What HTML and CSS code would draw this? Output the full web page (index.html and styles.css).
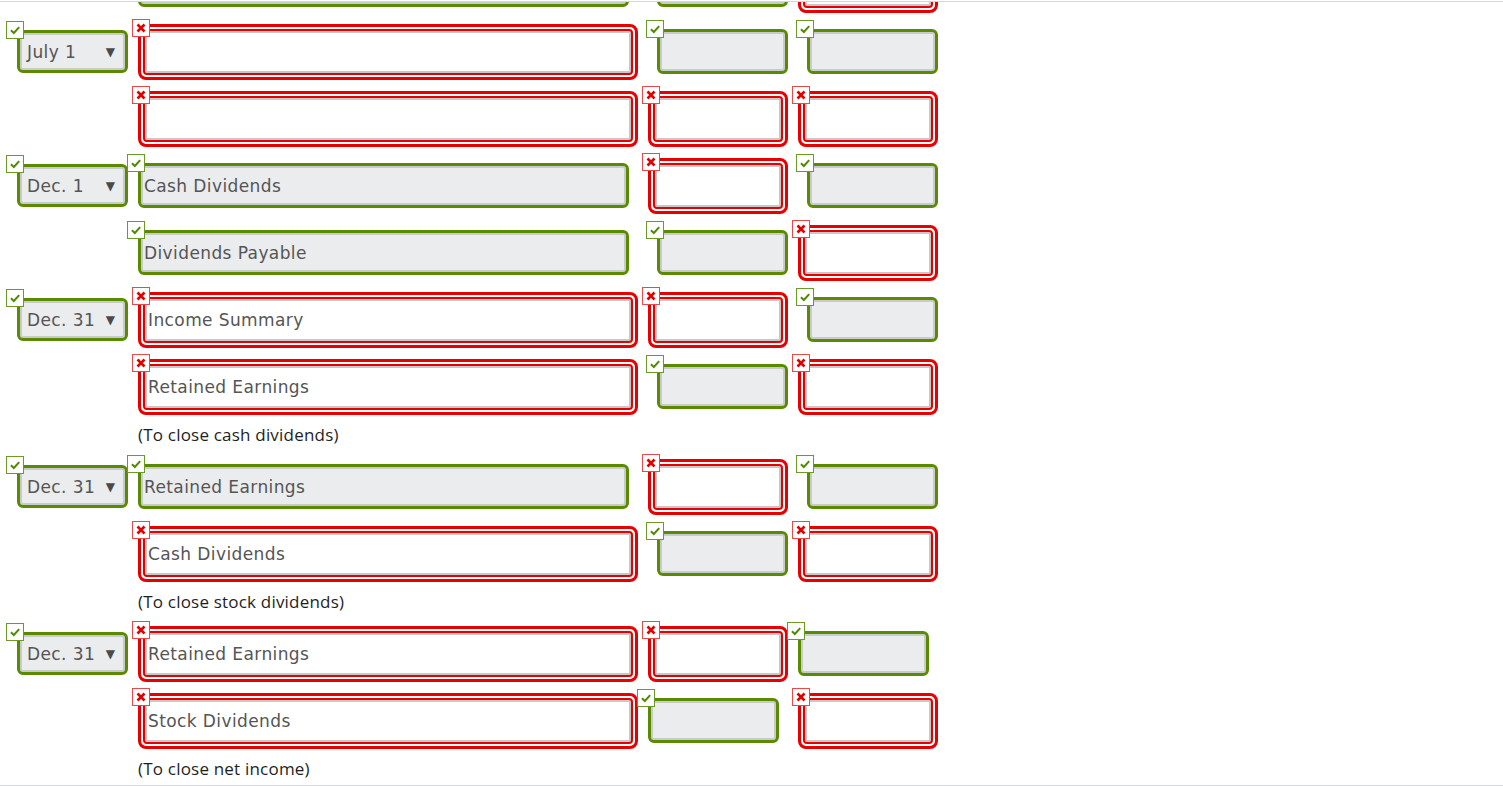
FILE: index.html
```html
<!DOCTYPE html>
<html>
<head>
<meta charset="utf-8">
<title>Journal entries</title>
<link rel="stylesheet" href="styles.css">
</head>
<body>
<div class="frame">
<div class="sheet">

  <div class="row">
    <div class="c-date"></div>
    <div class="c-acct"><div class="ok acct"><span class="badge b-ok"><svg viewBox="0 0 12 12"><polyline points="2.5,6.3 5,8.6 9.6,3.6"/></svg></span></div></div>
    <div class="c-amt"><div class="ok amt shift"><span class="badge b-ok"><svg viewBox="0 0 12 12"><polyline points="2.5,6.3 5,8.6 9.6,3.6"/></svg></span></div></div>
    <div class="c-amt"><div class="bad amt"><span class="badge b-bad"><svg viewBox="0 0 12 12"><path d="M3 3L9 9M9 3L3 9"/></svg></span><div class="inp"></div></div></div>
  </div>

  <div class="row">
    <div class="c-date"><div class="ok date"><span class="badge b-ok"><svg viewBox="0 0 12 12"><polyline points="2.5,6.3 5,8.6 9.6,3.6"/></svg></span><span>July 1</span><span class="arrow">▼</span></div></div>
    <div class="c-acct"><div class="bad acct"><span class="badge b-bad"><svg viewBox="0 0 12 12"><path d="M3 3L9 9M9 3L3 9"/></svg></span><div class="inp"></div></div></div>
    <div class="c-amt"><div class="ok amt shift"><span class="badge b-ok"><svg viewBox="0 0 12 12"><polyline points="2.5,6.3 5,8.6 9.6,3.6"/></svg></span></div></div>
    <div class="c-amt"><div class="ok amt shift"><span class="badge b-ok"><svg viewBox="0 0 12 12"><polyline points="2.5,6.3 5,8.6 9.6,3.6"/></svg></span></div></div>
  </div>

  <div class="row">
    <div class="c-date"></div>
    <div class="c-acct"><div class="bad acct"><span class="badge b-bad"><svg viewBox="0 0 12 12"><path d="M3 3L9 9M9 3L3 9"/></svg></span><div class="inp"></div></div></div>
    <div class="c-amt"><div class="bad amt"><span class="badge b-bad"><svg viewBox="0 0 12 12"><path d="M3 3L9 9M9 3L3 9"/></svg></span><div class="inp"></div></div></div>
    <div class="c-amt"><div class="bad amt"><span class="badge b-bad"><svg viewBox="0 0 12 12"><path d="M3 3L9 9M9 3L3 9"/></svg></span><div class="inp"></div></div></div>
  </div>

  <div class="row">
    <div class="c-date"><div class="ok date"><span class="badge b-ok"><svg viewBox="0 0 12 12"><polyline points="2.5,6.3 5,8.6 9.6,3.6"/></svg></span><span>Dec. 1</span><span class="arrow">▼</span></div></div>
    <div class="c-acct"><div class="ok acct"><span class="badge b-ok"><svg viewBox="0 0 12 12"><polyline points="2.5,6.3 5,8.6 9.6,3.6"/></svg></span>Cash Dividends</div></div>
    <div class="c-amt"><div class="bad amt"><span class="badge b-bad"><svg viewBox="0 0 12 12"><path d="M3 3L9 9M9 3L3 9"/></svg></span><div class="inp"></div></div></div>
    <div class="c-amt"><div class="ok amt shift"><span class="badge b-ok"><svg viewBox="0 0 12 12"><polyline points="2.5,6.3 5,8.6 9.6,3.6"/></svg></span></div></div>
  </div>

  <div class="row">
    <div class="c-date"></div>
    <div class="c-acct"><div class="ok acct"><span class="badge b-ok"><svg viewBox="0 0 12 12"><polyline points="2.5,6.3 5,8.6 9.6,3.6"/></svg></span>Dividends Payable</div></div>
    <div class="c-amt"><div class="ok amt shift"><span class="badge b-ok"><svg viewBox="0 0 12 12"><polyline points="2.5,6.3 5,8.6 9.6,3.6"/></svg></span></div></div>
    <div class="c-amt"><div class="bad amt"><span class="badge b-bad"><svg viewBox="0 0 12 12"><path d="M3 3L9 9M9 3L3 9"/></svg></span><div class="inp"></div></div></div>
  </div>

  <div class="row">
    <div class="c-date"><div class="ok date"><span class="badge b-ok"><svg viewBox="0 0 12 12"><polyline points="2.5,6.3 5,8.6 9.6,3.6"/></svg></span><span>Dec. 31</span><span class="arrow">▼</span></div></div>
    <div class="c-acct"><div class="bad acct"><span class="badge b-bad"><svg viewBox="0 0 12 12"><path d="M3 3L9 9M9 3L3 9"/></svg></span><div class="inp">Income Summary</div></div></div>
    <div class="c-amt"><div class="bad amt"><span class="badge b-bad"><svg viewBox="0 0 12 12"><path d="M3 3L9 9M9 3L3 9"/></svg></span><div class="inp"></div></div></div>
    <div class="c-amt"><div class="ok amt shift"><span class="badge b-ok"><svg viewBox="0 0 12 12"><polyline points="2.5,6.3 5,8.6 9.6,3.6"/></svg></span></div></div>
  </div>

  <div class="row">
    <div class="c-date"></div>
    <div class="c-acct"><div class="bad acct"><span class="badge b-bad"><svg viewBox="0 0 12 12"><path d="M3 3L9 9M9 3L3 9"/></svg></span><div class="inp">Retained Earnings</div></div></div>
    <div class="c-amt"><div class="ok amt shift"><span class="badge b-ok"><svg viewBox="0 0 12 12"><polyline points="2.5,6.3 5,8.6 9.6,3.6"/></svg></span></div></div>
    <div class="c-amt"><div class="bad amt"><span class="badge b-bad"><svg viewBox="0 0 12 12"><path d="M3 3L9 9M9 3L3 9"/></svg></span><div class="inp"></div></div></div>
  </div>

  <div class="note">(To close cash dividends)</div>

  <div class="row">
    <div class="c-date"><div class="ok date"><span class="badge b-ok"><svg viewBox="0 0 12 12"><polyline points="2.5,6.3 5,8.6 9.6,3.6"/></svg></span><span>Dec. 31</span><span class="arrow">▼</span></div></div>
    <div class="c-acct"><div class="ok acct"><span class="badge b-ok"><svg viewBox="0 0 12 12"><polyline points="2.5,6.3 5,8.6 9.6,3.6"/></svg></span>Retained Earnings</div></div>
    <div class="c-amt"><div class="bad amt"><span class="badge b-bad"><svg viewBox="0 0 12 12"><path d="M3 3L9 9M9 3L3 9"/></svg></span><div class="inp"></div></div></div>
    <div class="c-amt"><div class="ok amt shift"><span class="badge b-ok"><svg viewBox="0 0 12 12"><polyline points="2.5,6.3 5,8.6 9.6,3.6"/></svg></span></div></div>
  </div>

  <div class="row">
    <div class="c-date"></div>
    <div class="c-acct"><div class="bad acct"><span class="badge b-bad"><svg viewBox="0 0 12 12"><path d="M3 3L9 9M9 3L3 9"/></svg></span><div class="inp">Cash Dividends</div></div></div>
    <div class="c-amt"><div class="ok amt shift"><span class="badge b-ok"><svg viewBox="0 0 12 12"><polyline points="2.5,6.3 5,8.6 9.6,3.6"/></svg></span></div></div>
    <div class="c-amt"><div class="bad amt"><span class="badge b-bad"><svg viewBox="0 0 12 12"><path d="M3 3L9 9M9 3L3 9"/></svg></span><div class="inp"></div></div></div>
  </div>

  <div class="note">(To close stock dividends)</div>

  <div class="row">
    <div class="c-date"><div class="ok date"><span class="badge b-ok"><svg viewBox="0 0 12 12"><polyline points="2.5,6.3 5,8.6 9.6,3.6"/></svg></span><span>Dec. 31</span><span class="arrow">▼</span></div></div>
    <div class="c-acct"><div class="bad acct"><span class="badge b-bad"><svg viewBox="0 0 12 12"><path d="M3 3L9 9M9 3L3 9"/></svg></span><div class="inp">Retained Earnings</div></div></div>
    <div class="c-amt"><div class="bad amt"><span class="badge b-bad"><svg viewBox="0 0 12 12"><path d="M3 3L9 9M9 3L3 9"/></svg></span><div class="inp"></div></div></div>
    <div class="c-amt"><div class="ok amt"><span class="badge b-ok"><svg viewBox="0 0 12 12"><polyline points="2.5,6.3 5,8.6 9.6,3.6"/></svg></span></div></div>
  </div>

  <div class="row">
    <div class="c-date"></div>
    <div class="c-acct"><div class="bad acct"><span class="badge b-bad"><svg viewBox="0 0 12 12"><path d="M3 3L9 9M9 3L3 9"/></svg></span><div class="inp">Stock Dividends</div></div></div>
    <div class="c-amt"><div class="ok amt"><span class="badge b-ok"><svg viewBox="0 0 12 12"><polyline points="2.5,6.3 5,8.6 9.6,3.6"/></svg></span></div></div>
    <div class="c-amt"><div class="bad amt"><span class="badge b-bad"><svg viewBox="0 0 12 12"><path d="M3 3L9 9M9 3L3 9"/></svg></span><div class="inp"></div></div></div>
  </div>

  <div class="note">(To close net income)</div>

</div>
</div>
</body>
</html>
```

FILE: styles.css
```css
html, body {
  margin: 0;
  padding: 0;
  background: #ffffff;
}

body {
  font-family: "DejaVu Sans", Verdana, sans-serif;
  font-size: 17px;
  letter-spacing: 0.4px;
  color: #555555;
}

.frame {
  margin-top: 1px;
  height: 783px;
  border-top: 1px solid #d3d7db;
  border-bottom: 1px solid #d3d7db;
  overflow: hidden;
}

.sheet {
  margin-top: -51px;
}

.row {
  display: flex;
  align-items: center;
  height: 67px;
  padding-left: 17px;
}

.c-date {
  flex: none;
  width: 121px;
}

.c-acct {
  flex: none;
  width: 510px;
}

.c-amt {
  flex: none;
  width: 150px;
}

.note {
  box-sizing: border-box;
  height: 33px;
  padding: 0 0 4px 138px;
  display: flex;
  align-items: center;
  font-family: "Open Sans", "Noto Sans", sans-serif;
  font-size: 17px;
  letter-spacing: 0.2px;
  color: #1e1e1e;
}

/* correct field */
.ok {
  position: relative;
  box-sizing: border-box;
  height: 45px;
  border: 3px solid #5a8a00;
  border-radius: 6px;
  background: #ebecee;
  box-shadow: inset 0 0 0 2px #c9cacc;
  display: flex;
  align-items: center;
  padding: 0 6px 0 3px;
  white-space: nowrap;
}

.ok.acct { width: 491px; }
.ok.amt { width: 131px; }
.ok.shift { margin-left: 9px; }

.ok.date {
  width: 111px;
  height: 43px;
  padding: 0 10px 0 7px;
  justify-content: space-between;
}

.arrow {
  font-size: 12px;
  letter-spacing: 0;
  color: #4a4a4a;
}

/* incorrect field */
.bad {
  position: relative;
  box-sizing: border-box;
  border: 3px solid #e60000;
  border-radius: 8px;
  padding: 2px;
  background: #ffffff;
}

.bad.acct { width: 500px; }
.bad.amt { width: 140px; }

.inp {
  box-sizing: border-box;
  height: 46px;
  border: 2px solid #e60000;
  border-radius: 4px;
  background: #ffffff;
  box-shadow: inset 0 0 0 2px #c8c8c8;
  display: flex;
  align-items: center;
  padding-left: 3px;
  white-space: nowrap;
}

/* status badges */
.badge {
  position: absolute;
  z-index: 2;
  box-sizing: border-box;
  width: 18px;
  height: 18px;
  background: #ffffff;
  border: 1px solid;
  display: flex;
  align-items: center;
  justify-content: center;
}

.badge svg {
  width: 14px;
  height: 14px;
  fill: none;
}

.ok .badge {
  left: -14px;
  top: -12px;
}

.bad .badge {
  left: -9px;
  top: -8px;
}

.b-ok {
  border-color: #6b9a26;
}

.b-ok svg {
  stroke: #4f8a00;
  stroke-width: 1.7;
}

.b-bad {
  border-color: #e84a4a;
}

.b-bad svg {
  stroke: #e00000;
  stroke-width: 2.2;
}
```
